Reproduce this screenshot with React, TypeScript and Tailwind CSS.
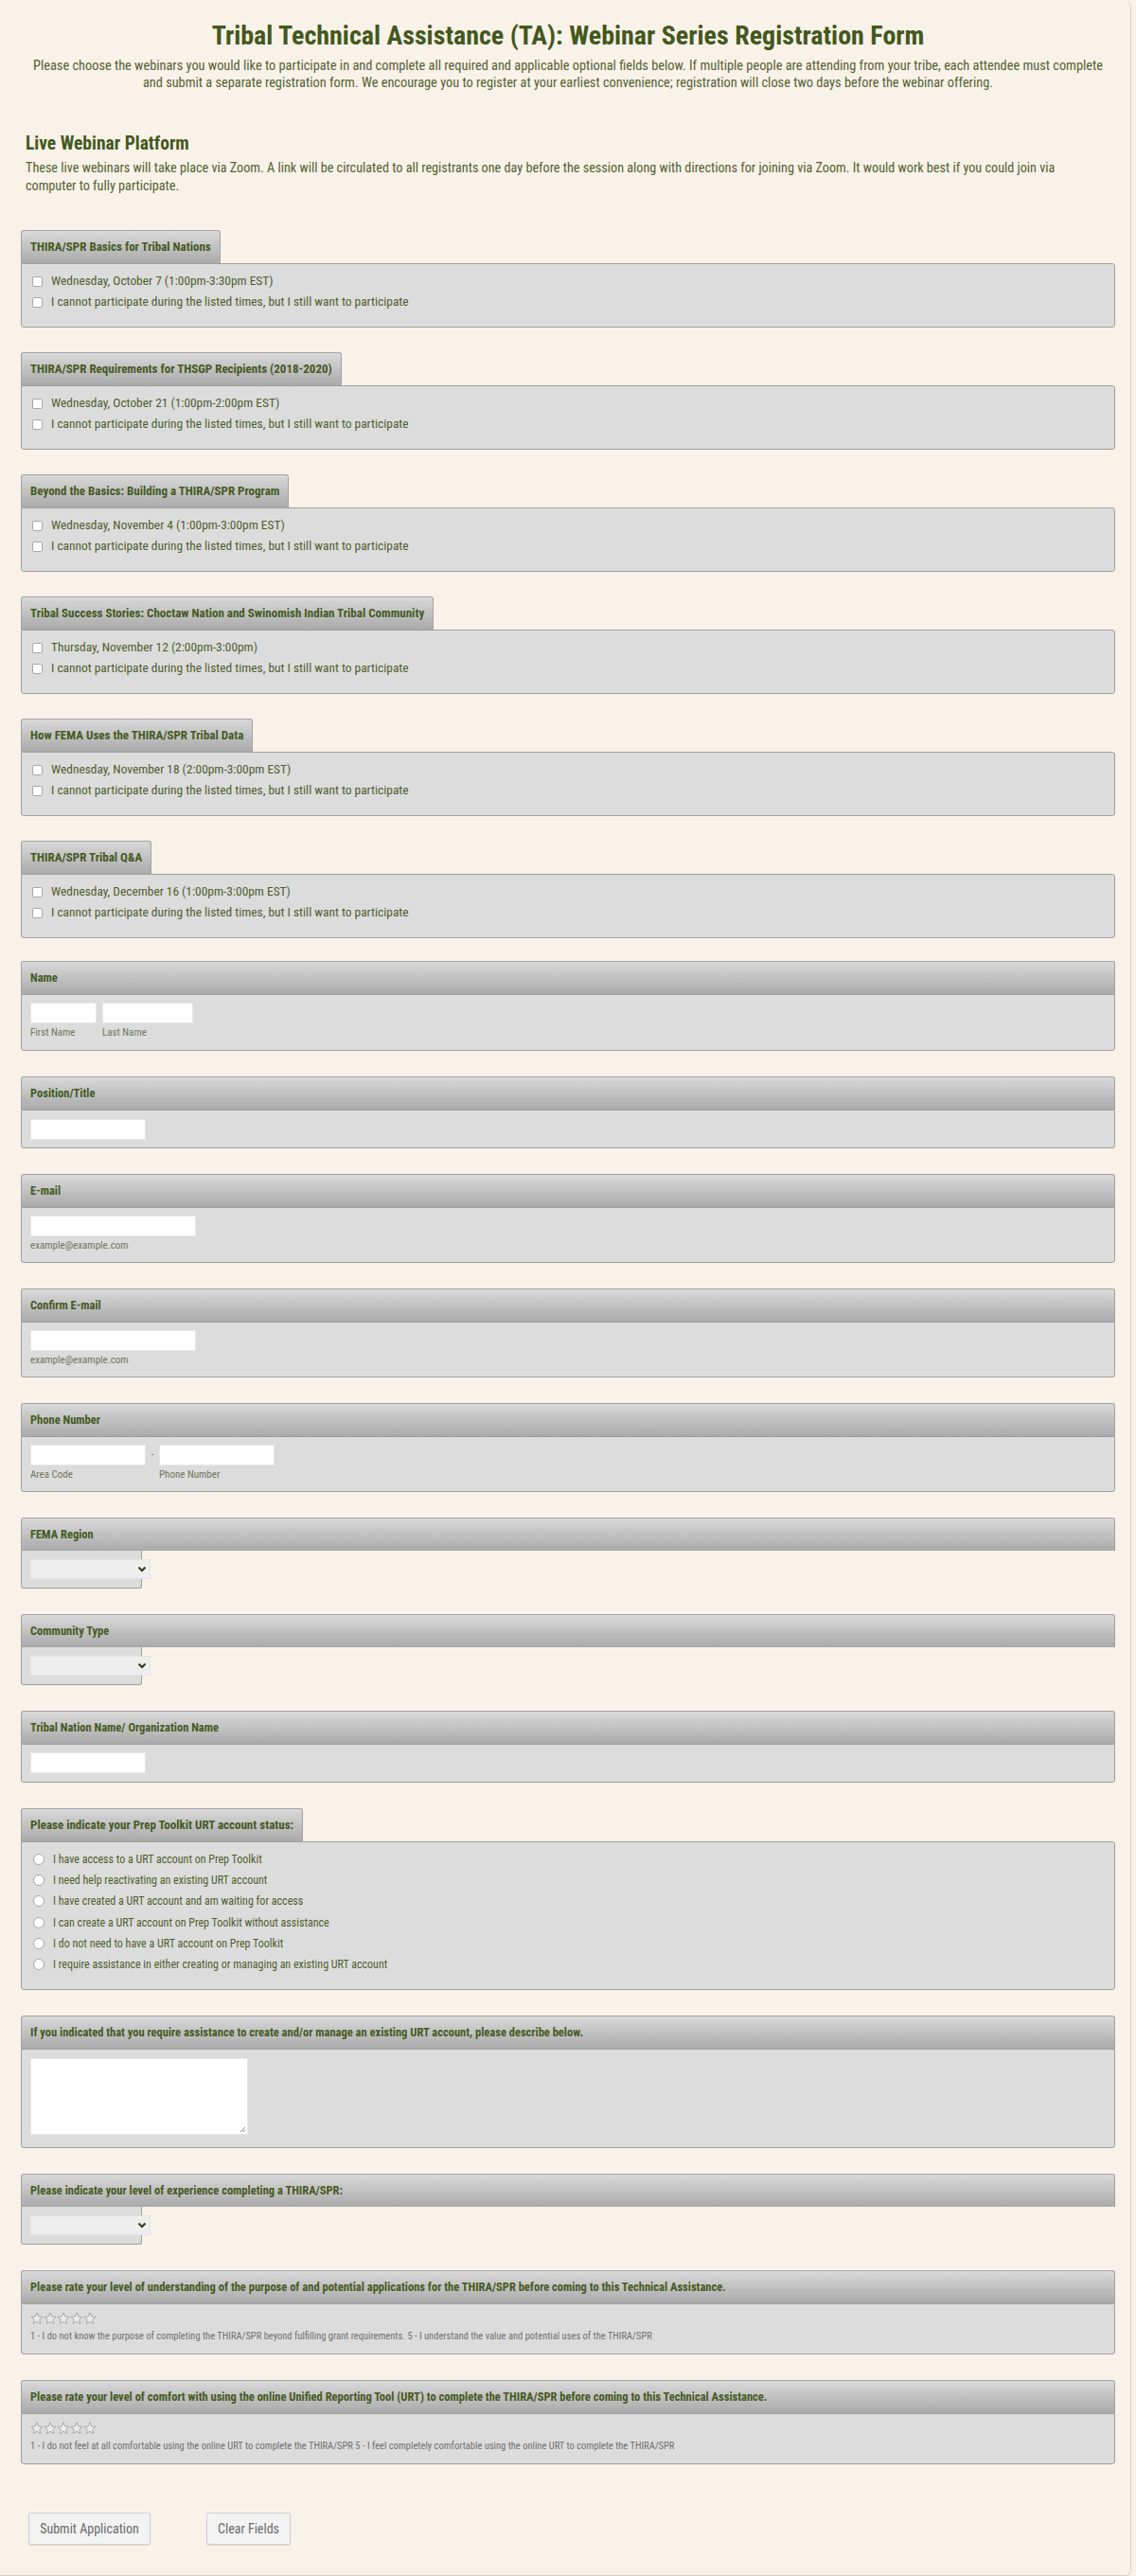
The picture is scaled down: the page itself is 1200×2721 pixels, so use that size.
import React from 'react';

const WEBINARS = [
  { title: 'THIRA/SPR Basics for Tribal Nations', date: 'Wednesday, October 7 (1:00pm-3:30pm EST)' },
  { title: 'THIRA/SPR Requirements for THSGP Recipients (2018-2020)', date: 'Wednesday, October 21 (1:00pm-2:00pm EST)' },
  { title: 'Beyond the Basics: Building a THIRA/SPR Program', date: 'Wednesday, November 4 (1:00pm-3:00pm EST)' },
  { title: 'Tribal Success Stories: Choctaw Nation and Swinomish Indian Tribal Community', date: 'Thursday, November 12 (2:00pm-3:00pm)' },
  { title: 'How FEMA Uses the THIRA/SPR Tribal Data', date: 'Wednesday, November 18 (2:00pm-3:00pm EST)' },
  { title: 'THIRA/SPR Tribal Q&A', date: 'Wednesday, December 16 (1:00pm-3:00pm EST)' },
];

const URT_OPTIONS = [
  'I have access to a URT account on Prep Toolkit',
  'I need help reactivating an existing URT account',
  'I have created a URT account and am waiting for access',
  'I can create a URT account on Prep Toolkit without assistance',
  'I do not need to have a URT account on Prep Toolkit',
  'I require assistance in either creating or managing an existing URT account',
];

const headerBg = 'bg-linear-to-b from-[#d9d9d9] to-[#aaaaaa] border border-[#a3a3a3]';
const headerText = 'text-[12.5px] font-bold text-[#445a1f]';

function TabSection({ title, children }: { title: string; children: React.ReactNode }) {
  return (
    <section>
      <div className={`inline-flex h-[35px] items-center px-[9px] rounded-t-[3px] border-b-0 ${headerBg}`}>
        <span className="text-[13px] font-bold text-[#445a1f]">{title}</span>
      </div>
      <div className="bg-[#dcdcdc] border border-[#a0a0a0] rounded-b-[3px] rounded-tr-[3px]">{children}</div>
    </section>
  );
}

function Section({ title, children }: { title: string; children: React.ReactNode }) {
  return (
    <section>
      <div className={`flex h-[35px] items-center px-[9px] rounded-t-[3px] border-b-0 ${headerBg}`}>
        <span className={headerText}>{title}</span>
      </div>
      <div className="bg-[#dcdcdc] border border-[#a0a0a0] rounded-b-[3px] px-[9px]">{children}</div>
    </section>
  );
}

function SelectSection({ title }: { title: string }) {
  return (
    <section>
      <div className={`flex h-[35px] items-center px-[9px] rounded-t-[3px] border-b-0 ${headerBg}`}>
        <span className={headerText}>{title}</span>
      </div>
      <div className="w-[128px] h-[40px] bg-[#dcdcdc] border border-t-0 border-[#a0a0a0] rounded-b-[3px] pl-[9px] pt-[9px]">
        <div className="flex w-[127px] h-[21px] items-center justify-end pr-[3px] bg-[#eeeeee] border border-[#e4e4e4]">
          <svg width="10" height="7" viewBox="0 0 10 7">
            <path d="M1.5 1.5 L5 5 L8.5 1.5" fill="none" stroke="#2f3a17" strokeWidth="2" />
          </svg>
        </div>
      </div>
    </section>
  );
}

function TextInput({ w }: { w: string }) {
  return <div className={`h-[22px] bg-white border border-[#e6e6e6] ${w}`} />;
}

function SubLabel({ children }: { children: React.ReactNode }) {
  return <div className="mt-[3px] text-[11px] leading-[14px] text-[#6f7659]">{children}</div>;
}

function Stars() {
  return (
    <div className="flex h-[14px] items-center">
      {[0, 1, 2, 3, 4].map((i) => (
        <svg key={i} width="14" height="14" viewBox="0 0 24 24">
          <polygon
            points="12,1.5 15,8.4 22.5,9.1 16.8,14 18.5,21.5 12,17.6 5.5,21.5 7.2,14 1.5,9.1 9,8.4"
            fill="#ececec"
            stroke="#a5a5a5"
            strokeWidth="1.6"
          />
        </svg>
      ))}
    </div>
  );
}

function Check() {
  return <span className="w-[11px] h-[11px] bg-white border border-[#a8a8a8] rounded-[2px] shrink-0" />;
}

function Radio() {
  return <span className="w-[12px] h-[12px] bg-white border border-[#a8a8a8] rounded-full shrink-0" />;
}

export default function App() {
  return (
    <div className="min-h-screen bg-[#f9f2e8] font-['Roboto','Liberation_Sans',sans-serif] font-stretch-[80%]">
      <div className="w-[1195px] h-[2721px] border-r border-b border-[#d6d3cd] rounded-br-[6px] rounded-tr-[8px] pl-[22px] pr-[16px] pt-[22px]">
        <h1 className="text-center text-[28px] leading-[32px] font-bold text-[#43581e]">
          Tribal Technical Assistance (TA): Webinar Series Registration Form
        </h1>
        <p className="mt-[7px] px-[8px] text-center text-[14.35px] leading-[18px] text-[#536132]">
          Please choose the webinars you would like to participate in and complete all required and applicable optional fields below. If multiple people are attending from your tribe, each attendee must complete and submit a separate registration form. We encourage you to register at your earliest convenience; registration will close two days before the webinar offering.
        </p>

        <div className="pl-[5px] pr-[30px] mt-[43px]">
          <h2 className="text-[19.5px] leading-[24px] font-bold text-[#43581e]">Live Webinar Platform</h2>
          <p className="mt-[4px] text-[14.2px] leading-[19px] text-[#536132]">
            These live webinars will take place via Zoom. A link will be circulated to all registrants one day before the session along with directions for joining via Zoom. It would work best if you could join via computer to fully participate.
          </p>
        </div>

        <div className="mt-[37px] flex flex-col gap-[26px]">
          {WEBINARS.map((w) => (
            <TabSection key={w.title} title={w.title}>
              <div className="pt-[7px] pb-[15px] pl-[11px]">
                {[w.date, 'I cannot participate during the listed times, but I still want to participate'].map((t) => (
                  <label key={t} className="flex h-[22px] items-center gap-[9px] text-[13.4px] text-[#4f5d2c]">
                    <Check />
                    {t}
                  </label>
                ))}
              </div>
            </TabSection>
          ))}
        </div>

        <div className="mt-[24px] flex flex-col gap-[27px]">
          <Section title="Name">
            <div className="pt-[8px] pb-[11px]">
              <div className="flex gap-[6px]">
                <div>
                  <TextInput w="w-[70px]" />
                  <SubLabel>First Name</SubLabel>
                </div>
                <div>
                  <TextInput w="w-[96px]" />
                  <SubLabel>Last Name</SubLabel>
                </div>
              </div>
            </div>
          </Section>

          <Section title="Position/Title">
            <div className="pt-[9px] pb-[8px]">
              <TextInput w="w-[122px]" />
            </div>
          </Section>

          {['E-mail', 'Confirm E-mail'].map((t) => (
            <Section key={t} title={t}>
              <div className="pt-[8px] pb-[10px]">
                <TextInput w="w-[175px]" />
                <SubLabel>example@example.com</SubLabel>
              </div>
            </Section>
          ))}

          <Section title="Phone Number">
            <div className="pt-[8px] pb-[10px]">
              <div className="flex items-start">
                <div>
                  <TextInput w="w-[122px]" />
                  <SubLabel>Area Code</SubLabel>
                </div>
                <span className="w-[14px] h-[22px] flex items-center justify-center text-[11px] text-[#6f7659]">-</span>
                <div>
                  <TextInput w="w-[122px]" />
                  <SubLabel>Phone Number</SubLabel>
                </div>
              </div>
            </div>
          </Section>

          <SelectSection title="FEMA Region" />
          <SelectSection title="Community Type" />

          <Section title="Tribal Nation Name/ Organization Name">
            <div className="pt-[8px] pb-[9px]">
              <TextInput w="w-[122px]" />
            </div>
          </Section>

          <TabSection title="Please indicate your Prep Toolkit URT account status:">
            <div className="pt-[7px] pb-[15px] pl-[12px]">
              {URT_OPTIONS.map((t) => (
                <label key={t} className="flex h-[22.2px] items-center gap-[9px] text-[12px] text-[#4f5d2c]">
                  <Radio />
                  {t}
                </label>
              ))}
            </div>
          </TabSection>

          <Section title="If you indicated that you require assistance to create and/or manage an existing URT account, please describe below.">
            <div className="pt-[9px] pb-[13px]">
              <div className="relative w-[230px] h-[81px] bg-white border border-[#e6e6e6]">
                <svg className="absolute right-[1px] bottom-[1px]" width="7" height="7" viewBox="0 0 7 7">
                  <path d="M6 1 L1 6 M6 4 L4 6" stroke="#8a8a8a" strokeWidth="1" />
                </svg>
              </div>
            </div>
          </Section>

          <SelectSection title="Please indicate your level of experience completing a THIRA/SPR:" />

          <Section title="Please rate your level of understanding of the purpose of and potential applications for the THIRA/SPR before coming to this Technical Assistance.">
            <div className="pt-[8px] pb-[12px]">
              <Stars />
              <div className="mt-[6px] text-[10.5px] leading-[12px] text-[#707070]">
                1 - I do not know the purpose of completing the THIRA/SPR beyond fulfilling grant requirements. 5 - I understand the value and potential uses of the THIRA/SPR
              </div>
            </div>
          </Section>

          <Section title="Please rate your level of comfort with using the online Unified Reporting Tool (URT) to complete the THIRA/SPR before coming to this Technical Assistance.">
            <div className="pt-[8px] pb-[12px]">
              <Stars />
              <div className="mt-[6px] text-[10.5px] leading-[12px] text-[#707070]">
                1 - I do not feel at all comfortable using the online URT to complete the THIRA/SPR 5 - I feel completely comfortable using the online URT to complete the THIRA/SPR
              </div>
            </div>
          </Section>
        </div>

        <div className="mt-[51px] ml-[8px] flex gap-[59px]">
          <button type="button" className="w-[129px] h-[34px] bg-[#f3f3f3] border border-[#cfcfcf] rounded-[2px] text-[14px] text-[#6a6a6a] shadow-[0_1px_1px_rgba(0,0,0,0.08)]">
            Submit Application
          </button>
          <button type="button" className="w-[89px] h-[34px] bg-[#f3f3f3] border border-[#cfcfcf] rounded-[2px] text-[14px] text-[#6a6a6a] shadow-[0_1px_1px_rgba(0,0,0,0.08)]">
            Clear Fields
          </button>
        </div>
      </div>
    </div>
  );
}
